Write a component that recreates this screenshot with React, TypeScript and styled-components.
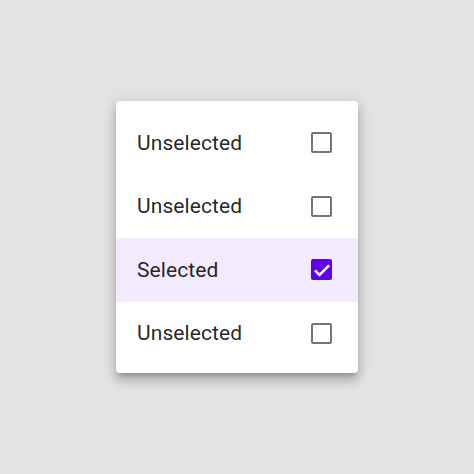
import React from "react";
import styled, { createGlobalStyle } from "styled-components";

const Global = createGlobalStyle`
  html, body { margin: 0; padding: 0; }
  body {
    background: #e3e3e3;
    font-family: Roboto, "Noto Sans", sans-serif;
  }
`;

const Page = styled.div`
  width: 474px;
  height: 474px;
  display: flex;
  align-items: center;
  justify-content: center;
`;

const Menu = styled.ul`
  list-style: none;
  margin: 0;
  padding: 10px 0 8px;
  width: 242px;
  background: #ffffff;
  border-radius: 4px;
  box-shadow: 0 5px 5px -3px rgba(0, 0, 0, 0.2), 0 8px 10px 1px rgba(0, 0, 0, 0.14),
    0 3px 14px 2px rgba(0, 0, 0, 0.12);
`;

const Item = styled.li<{ $selected: boolean }>`
  height: 63.5px;
  display: flex;
  align-items: center;
  justify-content: space-between;
  padding: 0 26px 0 21px;
  background: ${(p) => (p.$selected ? "#f2ebfe" : "transparent")};
`;

const Label = styled.span`
  font-size: 21px;
  color: rgba(0, 0, 0, 0.87);
  letter-spacing: 0.1px;
`;

const Box = styled.span<{ $checked: boolean }>`
  box-sizing: border-box;
  width: 21px;
  height: 21px;
  border-radius: 2px;
  border: ${(p) => (p.$checked ? "none" : "2px solid #757575")};
  background: ${(p) => (p.$checked ? "#6200ee" : "transparent")};
  display: flex;
  align-items: center;
  justify-content: center;
`;

const items = [
  { label: "Unselected", checked: false },
  { label: "Unselected", checked: false },
  { label: "Selected", checked: true },
  { label: "Unselected", checked: false },
];

export default function App() {
  return (
    <Page>
      <Global />
      <Menu>
        {items.map((it, i) => (
          <Item key={i} $selected={it.checked}>
            <Label>{it.label}</Label>
            <Box $checked={it.checked}>
              {it.checked && (
                <svg width="20" height="20" viewBox="0 0 24 24">
                  <path
                    d="M3.5 12.5 L9 18 L20.5 6.5"
                    fill="none"
                    stroke="#ffffff"
                    strokeWidth="3"
                  />
                </svg>
              )}
            </Box>
          </Item>
        ))}
      </Menu>
    </Page>
  );
}
